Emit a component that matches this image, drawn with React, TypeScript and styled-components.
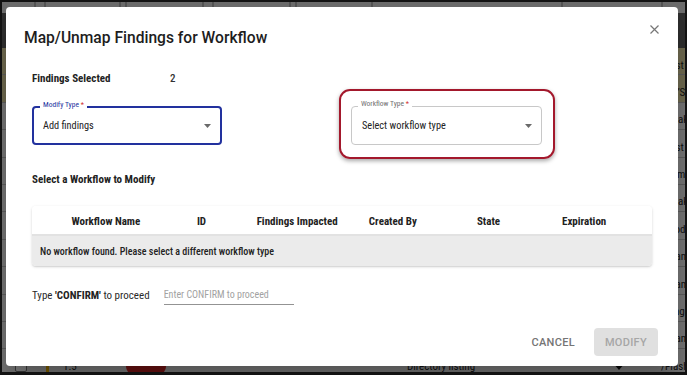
import React from 'react'
import styled, { createGlobalStyle } from 'styled-components'

const GlobalStyle = createGlobalStyle`
  html, body {
    margin: 0;
    padding: 0;
    background: #121212;
  }
  * {
    box-sizing: border-box;
  }
`

const BODY_FONT = '"Roboto Condensed", Roboto, "Liberation Sans", sans-serif'
const UI_FONT = 'Roboto, "Liberation Sans", sans-serif'

// ---- page behind the dialog ----

const Screen = styled.div`
  position: relative;
  width: 687px;
  height: 375px;
  border: 2px solid #121212;
  border-bottom-width: 3px;
  overflow: hidden;
  background: #e6e6e6;
  font-family: ${BODY_FONT};
`

const Toolbar = styled.div`
  display: flex;
  height: 11px;
  background: #d8d8d8;
`

const ToolCell = styled.div<{ $w: number }>`
  width: ${(p) => p.$w}px;
  border-right: 2px solid #a8a8a8;
`

const HeaderBand = styled.div`
  height: 35px;
  background: #5c5c5c;
`

const Row = styled.div<{ $tone: 'flag' | 'plain' }>`
  display: grid;
  grid-template-columns: 31px 17px 63px 281px 206px 48px 1fr;
  align-items: center;
  height: 27.4px;
  padding: 6px 0 0 13px;
  background: ${(p) => (p.$tone === 'flag' ? '#ddd39f' : '#e8e8e8')};
  border-bottom: 1px solid #bababa;
  font-size: 11px;
  color: #222;
  white-space: nowrap;
`

const RowCheck = styled.span`
  width: 12px;
  height: 12px;
  border: 1.5px solid #777;
  border-radius: 2px;
  background: #fff;
`

const SevBar = styled.span`
  width: 3px;
  height: 22px;
  background: #f2b400;
`

const StatusChip = styled.span`
  justify-self: start;
  width: 40px;
  height: 17px;
  border-radius: 9px;
  background: #d32424;
`

const DropTri = styled.span`
  width: 0;
  height: 0;
  border-left: 6px solid transparent;
  border-right: 6px solid transparent;
  border-top: 7px solid #111;
`

const PathCell = styled.span`
  overflow: hidden;
`

const Backdrop = styled.div`
  position: absolute;
  inset: 0;
  background: rgba(0, 0, 0, 0.5);
`

// ---- dialog ----

const Dialog = styled.div`
  position: absolute;
  left: 4px;
  top: 5px;
  width: 672px;
  display: flex;
  flex-direction: column;
  background: #fff;
  border-radius: 4px;
  box-shadow: 0 11px 15px -7px rgba(0, 0, 0, 0.2), 0 24px 38px 3px rgba(0, 0, 0, 0.14);
  color: #212121;
`

const Title = styled.h2`
  margin: 0;
  padding: 21px 18px 0;
  font-family: ${UI_FONT};
  font-size: 15.6px;
  font-weight: 500;
  line-height: 20px;
  color: #1d1d1d;
`

const CloseButton = styled.button`
  position: absolute;
  top: 12px;
  right: 14px;
  width: 20px;
  height: 20px;
  padding: 0;
  display: flex;
  align-items: center;
  justify-content: center;
  border: none;
  background: none;
`

const Content = styled.div`
  display: flex;
  flex-direction: column;
  padding: 0 26px;
`

const SummaryRow = styled.div`
  display: grid;
  grid-template-columns: 138px auto;
  margin-top: 23px;
  line-height: 16px;
  font-size: 11px;
`

const Strong = styled.span`
  font-weight: 700;
  color: #222;
`

const Count = styled.span`
  font-weight: 500;
  color: #333;
`

const FieldsRow = styled.div`
  display: flex;
  gap: 129px;
  margin-top: 19px;
`

const Highlight = styled.div`
  position: relative;
`

const Ring = styled.span`
  position: absolute;
  inset: -17px -13px -14px -12px;
  border: 2.5px solid #a3182c;
  border-radius: 11px;
  box-shadow: 0 2px 4px rgba(0, 0, 0, 0.35);
  pointer-events: none;
`

const Field = styled.div<{ $focused?: boolean }>`
  position: relative;
  display: flex;
  align-items: center;
  width: ${(p) => (p.$focused ? 190 : 191)}px;
  height: 39px;
  padding: 0 9px 0 ${(p) => (p.$focused ? 9 : 10)}px;
  border: ${(p) => (p.$focused ? '2px solid #22319e' : '1px solid #c8c8c8')};
  border-radius: 4px;
  font-size: 10.3px;
  color: #222;
`

const FieldLabel = styled.span<{ $focused?: boolean }>`
  position: absolute;
  top: -8px;
  left: 6px;
  padding: 0 3px;
  background: #fff;
  font-size: 7.5px;
  line-height: 10px;
  color: ${(p) => (p.$focused ? '#22319e' : '#6f6f6f')};
`

const Req = styled.span`
  color: #d32f2f;
`

const Arrow = styled.svg`
  margin-left: auto;
`

const SectionTitle = styled.div`
  margin-top: 27px;
  font-size: 11px;
  font-weight: 700;
  line-height: 16px;
  color: #222;
`

const Table = styled.div`
  margin-top: 18px;
  border-radius: 4px;
  overflow: hidden;
  box-shadow: 0 1px 3px rgba(0, 0, 0, 0.16), 0 1px 1px rgba(0, 0, 0, 0.06);
`

const HeadRow = styled.div`
  display: grid;
  grid-template-columns: repeat(6, 1fr);
  align-items: center;
  height: 30px;
  padding: 2px 20px 0 26px;
  border-bottom: 2px solid #e2e2e2;
  background: #fff;
`

const HeadCell = styled.div`
  text-align: center;
  font-size: 11px;
  font-weight: 700;
  color: #222;
`

const EmptyRow = styled.div`
  display: flex;
  align-items: center;
  height: 30px;
  padding-left: 8px;
  background: #ebebeb;
  font-size: 10px;
  font-weight: 500;
  color: #222;
`

const ConfirmRow = styled.div`
  display: flex;
  align-items: center;
  gap: 14px;
  height: 20px;
  margin-top: 19px;
  font-size: 11px;
  color: #2a2a2a;
`

const ConfirmInput = styled.input`
  width: 130px;
  height: 20px;
  padding: 0;
  border: none;
  border-bottom: 1px solid #939393;
  background: transparent;
  outline: none;
  font-family: ${BODY_FONT};
  font-size: 10px;
  color: #222;
  &::placeholder {
    color: #a2a2a2;
  }
`

const Actions = styled.div`
  display: flex;
  justify-content: flex-end;
  align-items: center;
  gap: 11px;
  margin-top: 23px;
  padding: 0 20px 10px;
`

const ActionButton = styled.button<{ $variant: 'text' | 'contained' }>`
  height: 28px;
  min-width: 57px;
  padding: 0 ${(p) => (p.$variant === 'contained' ? 11 : 8)}px;
  border: none;
  border-radius: 4px;
  background: ${(p) => (p.$variant === 'contained' ? '#e0e0e0' : 'transparent')};
  color: ${(p) => (p.$variant === 'contained' ? '#a6a6a6' : '#757575')};
  font-family: ${UI_FONT};
  font-size: 11px;
  font-weight: 500;
  letter-spacing: 0.3px;
  text-transform: uppercase;
`

const toolCells = [34, 10, 75, 6, 77, 10, 77, 6, 76, 190, 100]

// only the last row of the list peeks out under the dialog
const rows = [
  { tone: 'flag', ver: '', title: '', path: '/Test' },
  { tone: 'flag', ver: '', title: '', path: '/OS’S' },
  { tone: 'plain', ver: '', title: '', path: '/Lleak' },
  { tone: 'plain', ver: '', title: '', path: '/Test' },
  { tone: 'plain', ver: '', title: '', path: '/Admin' },
  { tone: 'plain', ver: '', title: '', path: '/Lleak' },
  { tone: 'plain', ver: '', title: '', path: '/Prod' },
  { tone: 'plain', ver: '', title: '', path: '/Team' },
  { tone: 'plain', ver: '', title: '', path: '/Team' },
  { tone: 'plain', ver: '', title: '', path: '/Stage' },
  { tone: 'plain', ver: '', title: '', path: '/Team' },
  { tone: 'plain', ver: '1.5', title: 'Directory listing', path: '/Flash' },
] as const

const columns = ['Workflow Name', 'ID', 'Findings Impacted', 'Created By', 'State', 'Expiration']

const DropArrow = () => (
  <Arrow width="7" height="4" viewBox="0 0 7 4">
    <path d="M0 0h7L3.5 4z" fill="#6a6a6a" />
  </Arrow>
)

const App = () => (
  <Screen>
    <GlobalStyle />
    <Toolbar>
      {toolCells.map((w, i) => (
        <ToolCell key={i} $w={w} />
      ))}
    </Toolbar>
    <HeaderBand />
    {rows.map((r, i) => (
      <Row key={i} $tone={r.tone}>
        <RowCheck />
        <SevBar />
        <span>{r.ver}</span>
        <StatusChip />
        <span>{r.title}</span>
        <DropTri />
        <PathCell>{r.path}</PathCell>
      </Row>
    ))}
    <Backdrop />

    <Dialog role="dialog">
      <Title>Map/Unmap Findings for Workflow</Title>
      <CloseButton aria-label="close">
        <svg width="9" height="9" viewBox="0 0 9 9">
          <path d="M0.5 0.5l8 8M8.5 0.5l-8 8" stroke="#777" strokeWidth="1.2" />
        </svg>
      </CloseButton>

      <Content>
        <SummaryRow>
          <Strong>Findings Selected</Strong>
          <Count>2</Count>
        </SummaryRow>

        <FieldsRow>
          <Field $focused>
            <FieldLabel $focused>
              Modify Type <Req>*</Req>
            </FieldLabel>
            Add findings
            <DropArrow />
          </Field>
          <Highlight>
            <Field>
              <FieldLabel>
                Workflow Type <Req>*</Req>
              </FieldLabel>
              Select workflow type
              <DropArrow />
            </Field>
            <Ring />
          </Highlight>
        </FieldsRow>

        <SectionTitle>Select a Workflow to Modify</SectionTitle>

        <Table>
          <HeadRow>
            {columns.map((c) => (
              <HeadCell key={c}>{c}</HeadCell>
            ))}
          </HeadRow>
          <EmptyRow>No workflow found. Please select a different workflow type</EmptyRow>
        </Table>

        <ConfirmRow>
          <span>
            Type <Strong>'CONFIRM'</Strong> to proceed
          </span>
          <ConfirmInput placeholder="Enter CONFIRM to proceed" />
        </ConfirmRow>
      </Content>

      <Actions>
        <ActionButton $variant="text">Cancel</ActionButton>
        <ActionButton $variant="contained" disabled>
          Modify
        </ActionButton>
      </Actions>
    </Dialog>
  </Screen>
)

export default App
